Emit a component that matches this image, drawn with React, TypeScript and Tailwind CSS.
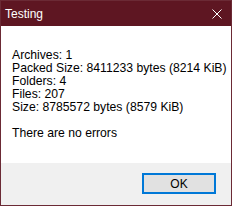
export default function App() {
  const lines = [
    "Archives: 1",
    "Packed Size: 8411233 bytes (8214 KiB)",
    "Folders: 4",
    "Files: 207",
    "Size: 8785572 bytes (8579 KiB)",
  ];

  return (
    <div className="w-[232px] h-[206px] flex flex-col border border-[#6b2a35] bg-white font-['Liberation_Sans',Arial,sans-serif] text-[12.2px] text-black">
      {/* Title bar */}
      <div className="h-[25px] flex items-center justify-between bg-[#5e1622] pl-[4px] pr-[9px] text-white">
        <span className="text-[12px] leading-none">Testing</span>
        <svg width="10" height="10" viewBox="0 0 10 10" className="text-white">
          <path d="M0.5 0.5 L9.5 9.5 M9.5 0.5 L0.5 9.5" stroke="currentColor" strokeWidth="1" />
        </svg>
      </div>

      {/* Body */}
      <div className="flex-1 pl-[11px] pt-[23px] leading-[13px]">
        {lines.map((l) => (
          <div key={l}>{l}</div>
        ))}
        <div className="mt-[13px]">There are no errors</div>
      </div>

      {/* Footer */}
      <div className="h-[42px] flex justify-end items-start bg-[#f0f0f0] pt-[10px] pr-[15px]">
        <button className="w-[74px] h-[21px] border-2 border-[#0078d7] bg-[#e1e1e1] text-[12px] leading-none">
          OK
        </button>
      </div>
    </div>
  );
}
